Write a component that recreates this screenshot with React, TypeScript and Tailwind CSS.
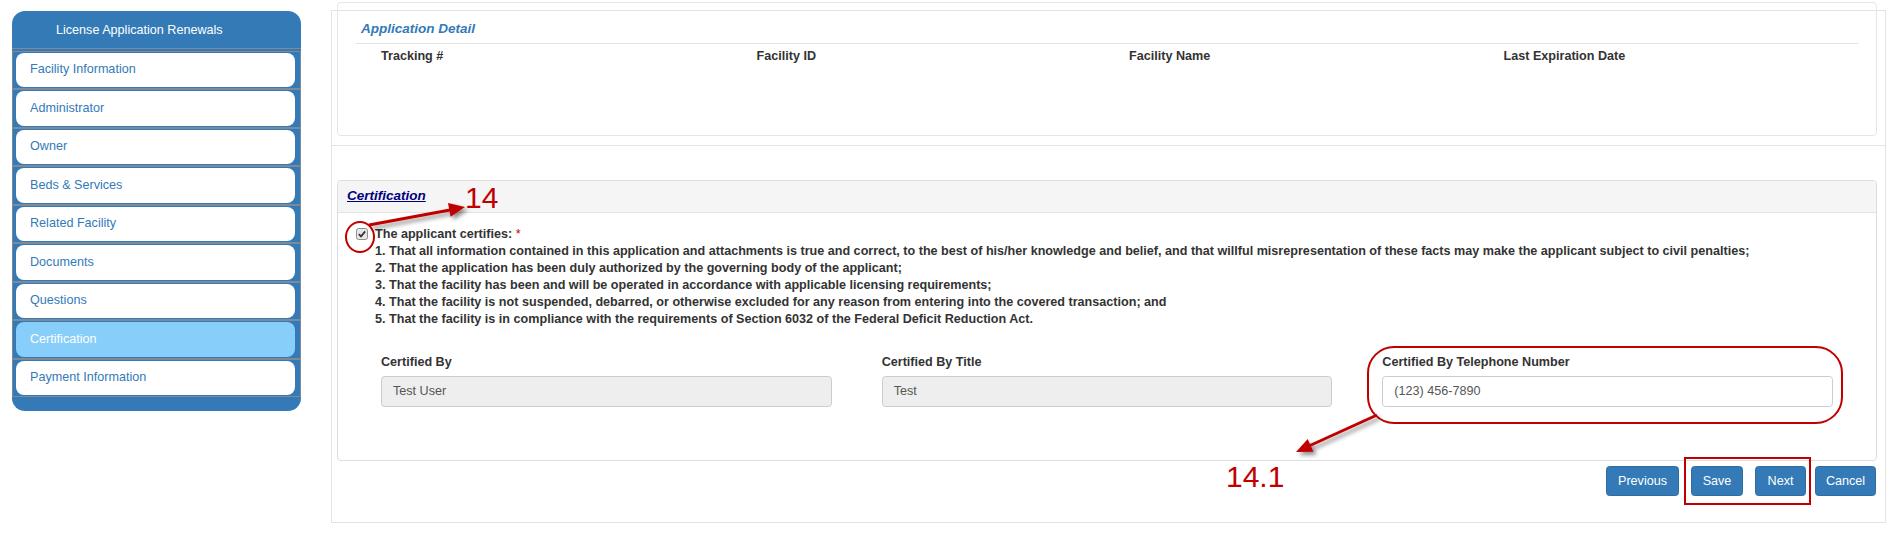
import React from "react";

const items = [
  "Facility Information",
  "Administrator",
  "Owner",
  "Beds & Services",
  "Related Facility",
  "Documents",
  "Questions",
  "Certification",
  "Payment Information",
];

const certLines = [
  "1. That all information contained in this application and attachments is true and correct, to the best of his/her knowledge and belief, and that willful misrepresentation of these facts may make the applicant subject to civil penalties;",
  "2. That the application has been duly authorized by the governing body of the applicant;",
  "3. That the facility has been and will be operated in accordance with applicable licensing requirements;",
  "4. That the facility is not suspended, debarred, or otherwise excluded for any reason from entering into the covered transaction; and",
  "5. That the facility is in compliance with the requirements of Section 6032 of the Federal Deficit Reduction Act.",
];

function Sidebar() {
  return (
    <aside className="ml-[12px] mt-[11px] w-[289px] self-start overflow-hidden rounded-[13px] bg-[#337ab7] pb-[14px]">
      <div className="flex h-[38px] items-center border-b border-[#7f8a96] pl-[44px] pt-[1px] text-white">
        License Application Renewals
      </div>
      <div className="pt-[1.5px]">
        {items.map((it) => {
          const active = it === "Certification";
          return (
            <div key={it} className="border border-[#7f8a96] py-[1px] pl-[3px] pr-[5px]">
              <div
                className={
                  active
                    ? "flex h-[34.5px] items-center rounded-[8px] bg-[#87cefa] pl-[14px] text-white"
                    : "flex h-[34.5px] items-center rounded-[8px] bg-white pl-[14px] text-[#337ab7]"
                }
              >
                {it}
              </div>
            </div>
          );
        })}
      </div>
    </aside>
  );
}

function Field({ label, value, disabled }: { label: string; value: string; disabled?: boolean }) {
  return (
    <div className="px-[25px]">
      <div className="mb-[4.5px] font-bold leading-[17px]">{label}</div>
      <div
        className={
          disabled
            ? "flex h-[31px] items-center rounded-[3.6px] border border-[#ccc] bg-[#eee] px-[11px] text-[#555]"
            : "flex h-[31px] items-center rounded-[3.6px] border border-[#ccc] bg-white px-[11px] text-[#555]"
        }
      >
        {value}
      </div>
    </div>
  );
}

function Overlay() {
  return (
    <svg
      className="pointer-events-none absolute left-0 top-0"
      width="1899"
      height="558"
      viewBox="0 0 1899 558"
    >
      <defs>
        <filter id="sh" x="-20%" y="-50%" width="140%" height="200%">
          <feDropShadow dx="3" dy="3" stdDeviation="2" floodColor="#000" floodOpacity="0.45" />
        </filter>
      </defs>
      <ellipse cx="360" cy="237" rx="14" ry="15" fill="none" stroke="#c00000" strokeWidth="2" />
      <g filter="url(#sh)">
        <line x1="369" y1="225" x2="450" y2="210" stroke="#c00000" strokeWidth="3" />
        <polygon points="465,207 450.6,216.8 448,203" fill="#c00000" />
      </g>
      <text x="465" y="208" fill="#c00000" fontSize="30" fontFamily="Liberation Sans, Arial, sans-serif">
        14
      </text>
      <rect x="1368" y="347" width="474" height="76" rx="26" fill="none" stroke="#c00000" strokeWidth="2" />
      <g filter="url(#sh)">
        <line x1="1377" y1="415" x2="1310" y2="445.5" stroke="#c00000" strokeWidth="3" />
        <polygon points="1296,452 1313.5,451.7 1307.7,438.9" fill="#c00000" />
      </g>
      <text x="1226" y="487" fill="#c00000" fontSize="30" fontFamily="Liberation Sans, Arial, sans-serif">
        14.1
      </text>
      <rect x="1685" y="458" width="125" height="46" fill="none" stroke="#c00000" strokeWidth="2" />
    </svg>
  );
}

export default function App() {
  return (
    <div className="relative flex h-[558px] w-[1899px] overflow-hidden bg-white font-['Liberation_Sans',Arial,sans-serif] text-[12.6px] text-[#333]">
      <Sidebar />
      <main className="ml-[30px] w-[1555px]">
        <div className="mt-[10px] h-[513px] border border-[#e3e3e3]">
          {/* Application detail */}
          <div className="border-b border-[#e3e3e3] pb-[9px] pl-[5px] pr-[8px]">
            <div className="-mt-[9px] h-[134px] rounded-[4px] border border-[#e6e6e6] px-[18px] pt-[17px]">
              <div className="border-b border-[#e3e3e3] pb-[5px] pl-[5px] text-[13.5px] font-bold italic leading-[18px] text-[#337ab7]">
                Application Detail
              </div>
              <div className="grid h-[24px] grid-cols-4 items-center font-bold">
                <div className="pl-[25px]">Tracking #</div>
                <div className="pl-[25px]">Facility ID</div>
                <div className="pl-[22px]">Facility Name</div>
                <div className="pl-[21px]">Last Expiration Date</div>
              </div>
            </div>
          </div>
          {/* Certification */}
          <div className="pl-[5px] pr-[8px] pt-[34px]">
            <div className="h-[281px] rounded-[4px] border border-[#ddd]">
              <div className="flex h-[32px] items-center rounded-t-[4px] border-b border-[#e3e3e3] bg-[#f5f5f5] pl-[9px]">
                <span className="text-[13.5px] font-bold italic text-[#000080] underline">Certification</span>
              </div>
              <div className="px-[18px] pt-[13px]">
                <div className="flex gap-[7px]">
                  <svg width="12" height="12" viewBox="0 0 12 12" className="mt-[2px] shrink-0">
                    <rect x="0.5" y="0.5" width="11" height="11" rx="2" fill="#e6e6e6" stroke="#8e8e8e" />
                    <path d="M2.8 6.2 L5 8.4 L9.2 3.4" fill="none" stroke="#333" strokeWidth="1.7" />
                  </svg>
                  <div className="font-bold leading-[17px]">
                    <div>
                      The applicant certifies: <span className="font-normal text-[#c00]">*</span>
                    </div>
                    {certLines.map((l) => (
                      <div key={l}>{l}</div>
                    ))}
                  </div>
                </div>
                <div className="mt-[26px] grid grid-cols-3">
                  <Field label="Certified By" value="Test User" disabled />
                  <Field label="Certified By Title" value="Test" disabled />
                  <Field label="Certified By Telephone Number" value="(123) 456-7890" />
                </div>
              </div>
            </div>
            <div className="mr-[1px] mt-[5px] flex justify-end text-white">
              <button className="h-[30px] w-[73px] rounded-[3.6px] border border-[#2e6da4] bg-[#337ab7]">Previous</button>
              <button className="ml-[12px] h-[30px] w-[52px] rounded-[3.6px] border border-[#2e6da4] bg-[#337ab7]">Save</button>
              <button className="ml-[12px] h-[30px] w-[51px] rounded-[3.6px] border border-[#2e6da4] bg-[#337ab7]">Next</button>
              <button className="ml-[9px] h-[30px] w-[61px] rounded-[3.6px] border border-[#2e6da4] bg-[#337ab7]">Cancel</button>
            </div>
          </div>
        </div>
      </main>
      <Overlay />
    </div>
  );
}
